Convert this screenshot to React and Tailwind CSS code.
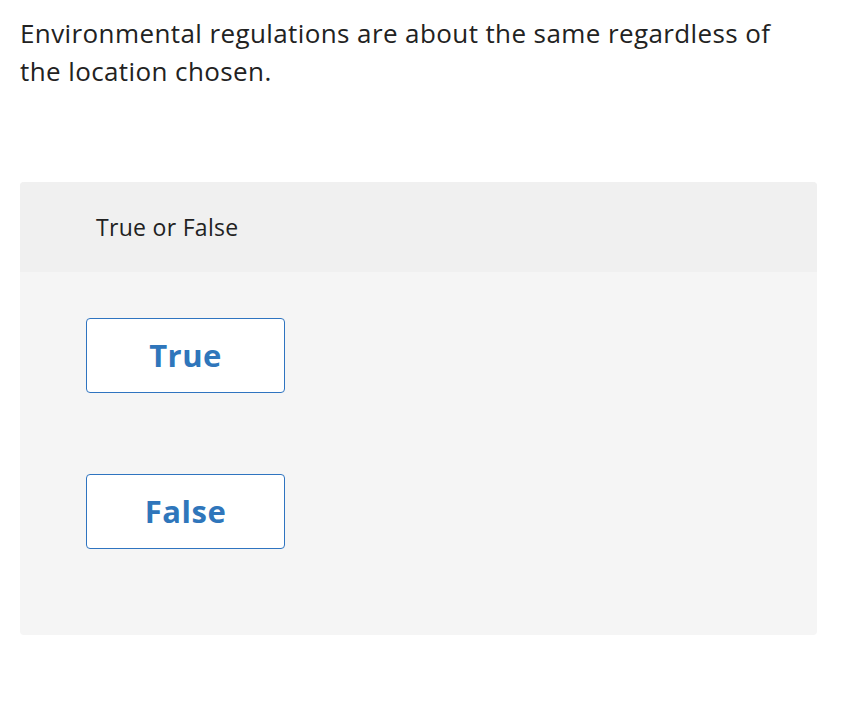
export default function App() {
  const opciones = ['True', 'False']

  return (
    <div className="min-h-screen bg-white font-['Open_Sans',sans-serif] text-[#222]">
      <div className="pl-5 pt-[14px]">
        <p className="w-[775px] text-[26px] leading-[38px] tracking-[0.4px]">
          Environmental regulations are about the same regardless of the location chosen.
        </p>
      </div>

      {/* panel de respuesta */}
      <div className="mx-5 mt-[92px] w-[797px] rounded-[4px] overflow-hidden bg-[#f5f5f5]">
        <div className="h-[90px] bg-[#f0f0f0] flex items-center pl-[76px]">
          <span className="text-[23px] tracking-[0.3px]">True or False</span>
        </div>
        <div className="pl-[66px] pt-[46px] pb-[86px] flex flex-col gap-[81px]">
          {opciones.map(op => (
            <button
              key={op}
              className="w-[199px] h-[75px] rounded-[4px] border border-[#2f74c0] bg-white text-[#2f76bb] text-[31px] font-bold tracking-[0.5px] flex items-center justify-center"
            >
              {op}
            </button>
          ))}
        </div>
      </div>
    </div>
  )
}
